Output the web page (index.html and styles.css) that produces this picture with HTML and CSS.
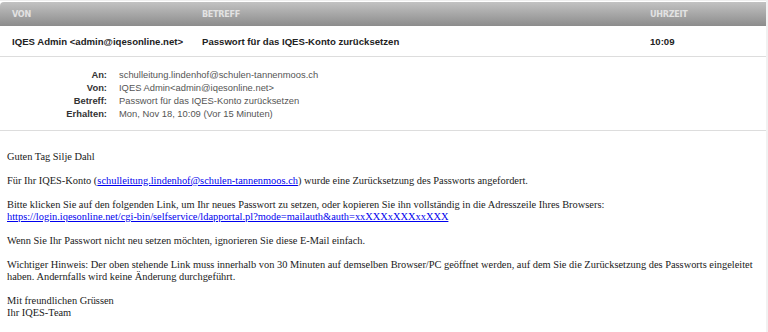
FILE: index.html
```html
<!DOCTYPE html>
<html lang="de">
<head>
    <meta charset="UTF-8">
    <meta name="viewport" content="width=device-width, initial-scale=1.0">
    <title>Passwort für das IQES-Konto zurücksetzen</title>
    <link rel="stylesheet" href="styles.css">
</head>
<body>

    <div class="mail-view">
        <div class="list-head">
            <div>Von</div>
            <div>Betreff</div>
            <div>Uhrzeit</div>
        </div>

        <div class="list-row">
            <div>IQES Admin &lt;admin@iqesonline.net&gt;</div>
            <div>Passwort für das IQES-Konto zurücksetzen</div>
            <div>10:09</div>
        </div>

        <div class="mail-meta">
            <div class="meta-label">An:</div>
            <div class="meta-value">schulleitung.lindenhof@schulen-tannenmoos.ch</div>
            <div class="meta-label">Von:</div>
            <div class="meta-value">IQES Admin&lt;admin@iqesonline.net&gt;</div>
            <div class="meta-label">Betreff:</div>
            <div class="meta-value">Passwort für das IQES-Konto zurücksetzen</div>
            <div class="meta-label">Erhalten:</div>
            <div class="meta-value">Mon, Nov 18, 10:09 (Vor 15 Minuten)</div>
        </div>

        <div class="mail-body">
            <p>Guten Tag Silje Dahl</p>
            <p>Für Ihr IQES-Konto (<a href="#">schulleitung.lindenhof@schulen-tannenmoos.ch</a>) wurde eine Zurücksetzung des Passworts angefordert.</p>
            <p>Bitte klicken Sie auf den folgenden Link, um Ihr neues Passwort zu setzen, oder kopieren Sie ihn vollständig in die Adresszeile Ihres Browsers:<br>
            <a href="#">https://login.iqesonline.net/cgi-bin/selfservice/ldapportal.pl?mode=mailauth&amp;auth=xxXXXxXXXxxXXX</a></p>
            <p>Wenn Sie Ihr Passwort nicht neu setzen möchten, ignorieren Sie diese E-Mail einfach.</p>
            <p>Wichtiger Hinweis: Der oben stehende Link muss innerhalb von 30 Minuten auf demselben Browser/PC geöffnet werden, auf dem Sie die Zurücksetzung des Passworts eingeleitet haben. Andernfalls wird keine Änderung durchgeführt.</p>
            <p>Mit freundlichen Grüssen<br>
            Ihr IQES-Team</p>
        </div>
    </div>

</body>
</html>
```

FILE: styles.css
```css
body {
    margin: 0;
    padding: 0;
    background-color: #f1f1f1;
    font-family: "Liberation Sans", Arial, sans-serif;
}

.mail-view {
    width: 766px;
    min-height: 332px;
    background-color: #fff;
    padding-top: 2px;
    box-sizing: border-box;
    border-top: 1px solid #eee;
}

.list-head,
.list-row {
    display: grid;
    grid-template-columns: 190px 448px 1fr;
    padding-left: 12px;
    align-items: center;
}

.list-head {
    height: 24px;
    margin-top: -1px;
    background: linear-gradient(to bottom, #c2c2c2, #8c8c8c);
    border-top-left-radius: 4px;
    color: #e2e2e2;
    font-family: "Liberation Sans Narrow", "DejaVu Sans Condensed", sans-serif;
    font-weight: bold;
    font-size: 9px;
    text-transform: uppercase;
    letter-spacing: -0.3px;
}

.list-row {
    height: 30px;
    border-bottom: 1px solid #ddd;
    font-size: 9.6px;
    font-weight: bold;
    color: #222;
    white-space: nowrap;
}

.mail-meta {
    display: grid;
    grid-template-columns: 107px 1fr;
    column-gap: 12px;
    padding: 11px 0 10px 0;
    border-bottom: 1px solid #ddd;
    font-size: 9.4px;
    line-height: 13px;
}

.meta-label {
    text-align: right;
    font-weight: bold;
    color: #333;
}

.meta-value {
    color: #555;
}

.mail-body {
    padding: 20px 7px 10px 7px;
    font-family: "Liberation Serif", "Times New Roman", serif;
    font-size: 10.4px;
    line-height: 12px;
    color: #1a1a1a;
}

.mail-body p {
    margin: 0 0 12px 0;
}

.mail-body a {
    color: #0000ee;
}
```
